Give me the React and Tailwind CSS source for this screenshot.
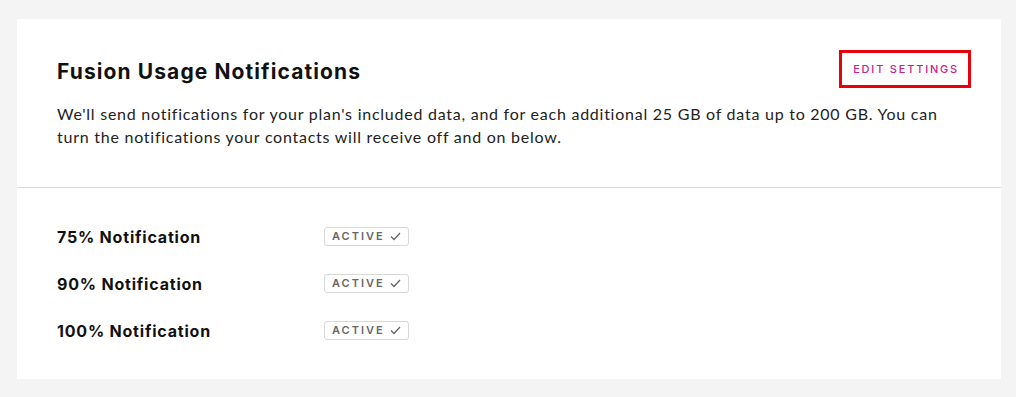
export default function App() {
  const rows = ["75% Notification", "90% Notification", "100% Notification"];
  return (
    <div className="min-h-[397px] w-[1016px] bg-[#f4f4f4] pt-[19px] pl-[17px]" style={{ fontFamily: "Inter, 'Open Sans', sans-serif" }}>
      <div className="w-[984px] h-[360px] bg-white">
        <div className="px-[40px] pt-[31px] pb-[39px] border-b border-[#dcdcdc]">
          <div className="flex items-center justify-between">
            <h1 className="text-[21px] font-bold text-[#111] tracking-[1.1px] mt-[5px]">Fusion Usage Notifications</h1>
            <button className="border-[3px] border-[#e8000b] h-[38px] pl-[11px] pr-[9px] text-[11px] font-medium tracking-[1.8px] text-[#c8208c] mr-[-10px]">EDIT SETTINGS</button>
          </div>
          <p className="mt-[14px] text-[16px] leading-[23px] text-[#222] w-[892px] tracking-[0.75px]" style={{ fontFamily: "Lato, sans-serif" }}>
            We'll send notifications for your plan's included data, and for each additional 25 GB of data up to 200 GB. You can turn the notifications your contacts will receive off and on below.
          </p>
        </div>
        <div className="px-[40px] pt-[39px] flex flex-col gap-[28px]">
          {rows.map((r) => (
            <div key={r} className="flex items-center h-[19px]">
              <div className="w-[267px] text-[16px] font-bold text-[#111] tracking-[0.8px]">{r}</div>
              <div className="h-[19px] px-[7px] border border-[#d8d8d8] rounded-[3px] flex items-center gap-[5px] text-[11px] font-semibold tracking-[2px] text-[#666]">
                ACTIVE
                <svg width="11" height="9" viewBox="0 0 11 9" fill="none"><path d="M1 4.5L4 7.5L10 1" stroke="#666" strokeWidth="1.3" /></svg>
              </div>
            </div>
          ))}
        </div>
      </div>
    </div>
  );
}
